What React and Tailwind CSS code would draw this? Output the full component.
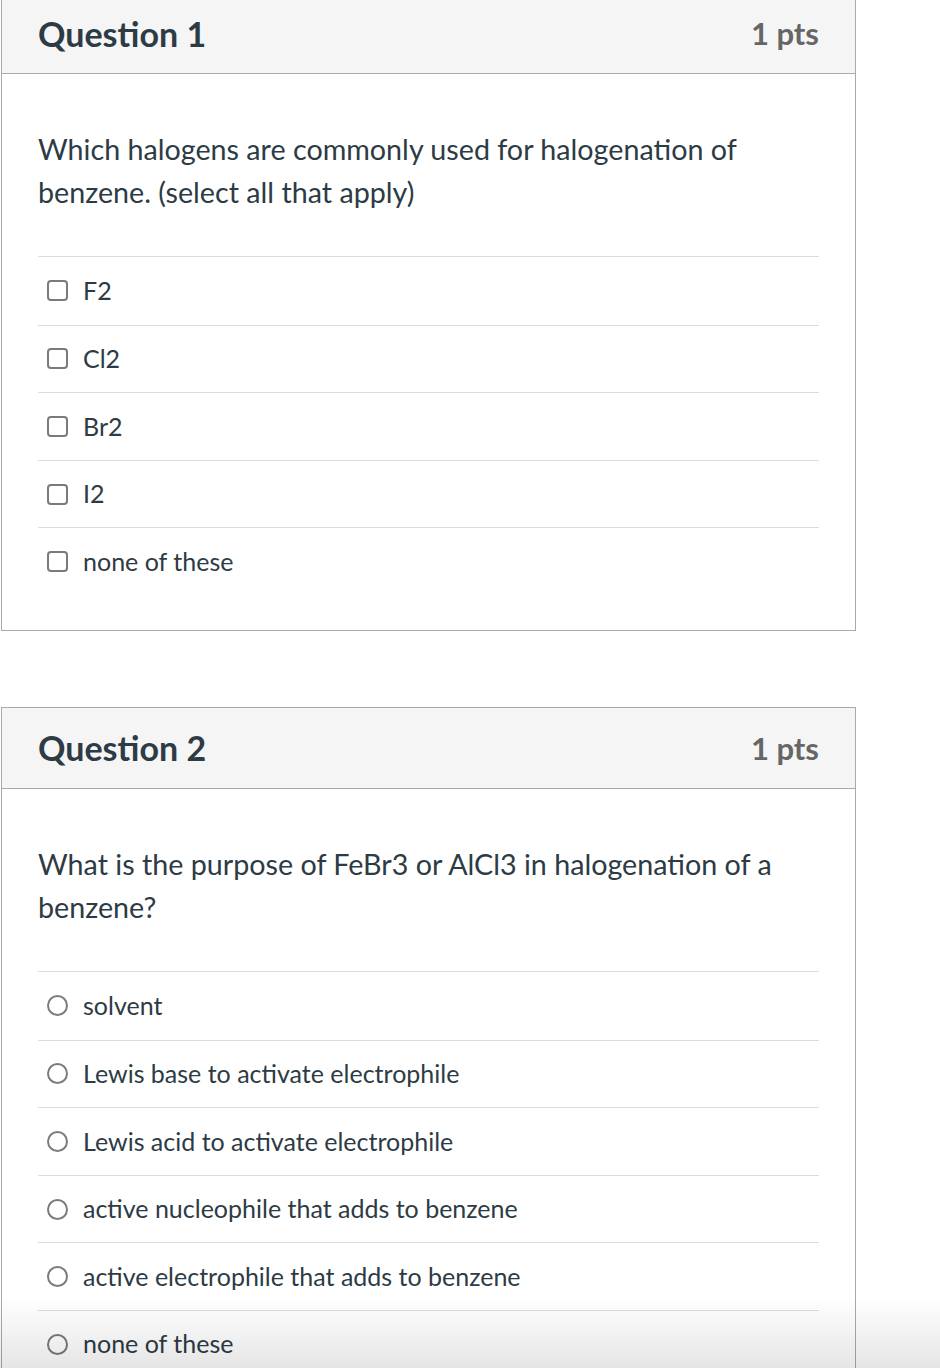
const questions = [
  {
    title: "Question 1",
    points: "1 pts",
    text: "Which halogens are commonly used for halogenation of benzene. (select all that apply)",
    type: "checkbox",
    answers: ["F2", "Cl2", "Br2", "I2", "none of these"],
  },
  {
    title: "Question 2",
    points: "1 pts",
    text: "What is the purpose of FeBr3 or AlCl3 in halogenation of a benzene?",
    type: "radio",
    answers: [
      "solvent",
      "Lewis base to activate electrophile",
      "Lewis acid to activate electrophile",
      "active nucleophile that adds to benzene",
      "active electrophile that adds to benzene",
      "none of these",
    ],
  },
];

const Answer = ({ label, type, first }) => (
  <div
    className={`flex items-center h-[67.6px] ${first ? "" : "border-t border-[#dcdcdc]"}`}
  >
    <span className="w-[45px] flex items-center pl-[9px]">
      {type === "checkbox" ? (
        <span className="block w-[21px] h-[21px] rounded-[4px] border-2 border-[#7b7b7b] bg-white"></span>
      ) : (
        <span className="block w-[21px] h-[21px] rounded-full border-2 border-[#7b7b7b] bg-white"></span>
      )}
    </span>
    <span className="text-[25px] text-[#2d3b45]">{label}</span>
  </div>
);

const QuestionCard = ({ q, className }) => (
  <div className={`w-[855px] ml-px border border-[#aaaaaa] bg-white ${className}`}>
    <div className="flex items-center justify-between h-[81px] px-[36px] bg-[#f5f5f5] border-b border-[#aaaaaa]">
      <h2 className="text-[34px] font-bold text-[#2d3b45]">{q.title}</h2>
      <span className="text-[31px] font-bold text-[#666666]">{q.points}</span>
    </div>
    <div className="px-[36px] pt-[54px] pb-[35px]">
      <p className="text-[28.7px] leading-[43px] text-[#2d3b45] pr-[40px]">{q.text}</p>
      <div className="mt-[42px] border-t border-[#dcdcdc]">
        {q.answers.map((a, i) => (
          <Answer key={a} label={a} type={q.type} first={i === 0} />
        ))}
      </div>
    </div>
  </div>
);

export default function App() {
  return (
    <div className="relative min-h-screen bg-white font-['Lato','Liberation_Sans',sans-serif] overflow-hidden">
      <div className="-mt-[8px]">
        <QuestionCard q={questions[0]} />
        <QuestionCard q={questions[1]} className="mt-[76px]" />
      </div>
      <div className="pointer-events-none fixed bottom-0 left-0 right-0 h-[70px] bg-linear-to-b from-black/0 to-black/10"></div>
    </div>
  );
}
